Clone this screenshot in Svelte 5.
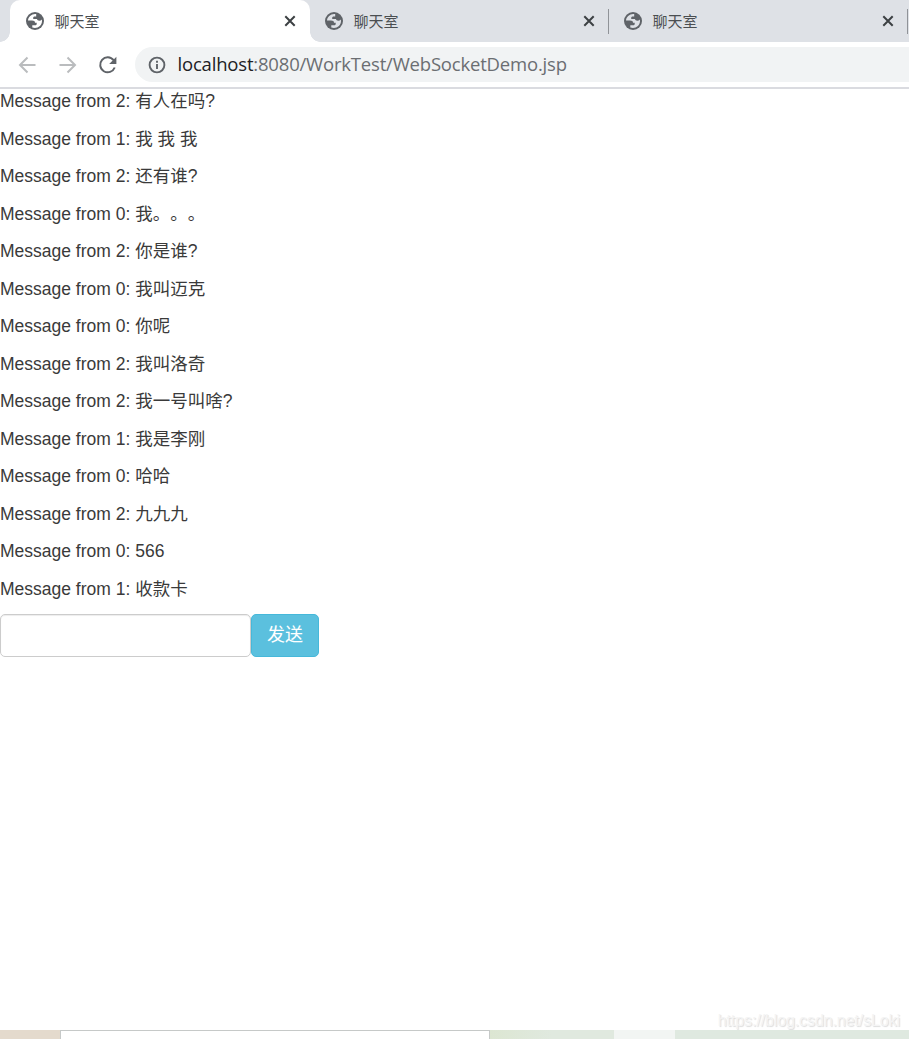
<script>
  const tabs = [
    { id: 1, title: '聊天室', active: true },
    { id: 2, title: '聊天室', active: false },
    { id: 3, title: '聊天室', active: false }
  ];

  const messages = [
    { from: 2, text: '有人在吗?' },
    { from: 1, text: '我 我 我' },
    { from: 2, text: '还有谁?' },
    { from: 0, text: '我。。。' },
    { from: 2, text: '你是谁?' },
    { from: 0, text: '我叫迈克' },
    { from: 0, text: '你呢' },
    { from: 2, text: '我叫洛奇' },
    { from: 2, text: '我一号叫啥?' },
    { from: 1, text: '我是李刚' },
    { from: 0, text: '哈哈' },
    { from: 2, text: '九九九' },
    { from: 0, text: '566' },
    { from: 1, text: '收款卡' }
  ];

  let draft = $state('');
</script>

<div class="window">
  <header class="tabs">
    {#each tabs as tab (tab.id)}
      <div class="tab" class:active={tab.active}>
        <svg class="globe" viewBox="0 0 18 18">
          <circle cx="9" cy="9" r="9" />
          <path
            d="M10.2 2C6 1.400 2.200 4.600 2 8.600h4c2 0 3 .8 3 2.100h1.700v1c0 .9-.6 1.600-1.600 1.600H6.300v2.200c4.900 1.700 9.700-1.700 9.700-6.500 0-.7-.1-1.100-.2-1.500-.6.8-1.500 1.200-2.500 1.200-1.300 0-2.100-.6-2.300-1.700H7.200V5.800c0-.8.6-1.400 1.400-1.400h1.600z"
          />
        </svg>
        <span class="title">{tab.title}</span>
        <svg class="close" viewBox="0 0 12 12">
          <path d="M1.300 1.300l9.400 9.400M10.700 1.300l-9.400 9.400" />
        </svg>
      </div>
    {/each}
  </header>

  <nav class="toolbar">
    <svg class="nav-icon muted" viewBox="0 0 20 20">
      <path d="M18.500 10H3.500M10.500 2.500L3 10l7.500 7.500" />
    </svg>
    <svg class="nav-icon muted" viewBox="0 0 20 20">
      <path d="M2.500 10h15M10.500 2.500L18 10l-7.500 7.500" />
    </svg>
    <svg class="nav-icon" viewBox="0 0 20 20">
      <path d="M16.600 5.200A7.500 7.500 0 1 0 17.700 12.500" />
      <path class="solid" d="M19.400 1.800v7.200h-7.200z" />
    </svg>
    <div class="address">
      <svg class="info" viewBox="0 0 18 18">
        <circle cx="9" cy="9" r="7.400" />
        <path d="M9 8v5M9 4.800v1.900" />
      </svg>
      <span class="url"><b>localhost</b>:8080/WorkTest/WebSocketDemo.jsp</span>
    </div>
  </nav>

  <main>
    {#each messages as message}
      <p>Message from {message.from}: {message.text}</p>
    {/each}
    <form class="send" onsubmit={(event) => event.preventDefault()}>
      <input type="text" bind:value={draft} />
      <button type="submit">发送</button>
    </form>
  </main>

  <div class="watermark">https://blog.csdn.net/sLoki</div>

  <footer class="desktop">
    <div class="sand"></div>
    <div class="panel"></div>
    <div class="grass"></div>
    <div class="light"></div>
    <div class="mint"></div>
  </footer>
</div>

<style>
  :global(body) {
    margin: 0;
    background: #fff;
  }

  .window {
    box-sizing: border-box;
    display: flex;
    flex-direction: column;
    height: 1039px;
    overflow: hidden;
    width: 909px;
  }

  .tabs {
    background: #dee1e6;
    display: flex;
    flex: none;
    height: 42px;
    padding-left: 10px;
  }

  .tab {
    align-items: center;
    box-sizing: border-box;
    display: flex;
    flex: none;
    height: 42px;
    padding: 0 14px 0 15px;
    position: relative;
    width: 299px;
  }

  .tab.active {
    background: #fff;
    border-radius: 10px 10px 0 0;
    padding-left: 16px;
    width: 300px;
  }

  /* flared feet of the selected tab */
  .tab.active::before,
  .tab.active::after {
    bottom: 0;
    content: '';
    height: 10px;
    position: absolute;
    width: 10px;
  }

  .tab.active::before {
    background: radial-gradient(circle at 0 0, transparent 9.5px, #fff 10px);
    left: -10px;
  }

  .tab.active::after {
    background: radial-gradient(circle at 100% 0, transparent 9.5px, #fff 10px);
    right: -10px;
  }

  .tab:not(.active)::after {
    background: #909398;
    content: '';
    height: 25px;
    position: absolute;
    right: 0;
    top: 9px;
    width: 1.5px;
  }

  .globe {
    height: 18px;
    width: 18px;
  }

  .globe circle {
    fill: #5f6368;
  }

  .globe path {
    fill: #dee1e6;
  }

  .active .globe path {
    fill: #fff;
  }

  .title {
    color: #4a4e51;
    flex: 1;
    font: 400 15px/20px 'Noto Sans CJK SC', sans-serif;
    margin-left: 10.5px;
  }

  .close {
    height: 12px;
    width: 12px;
  }

  .close path {
    stroke: #3c4043;
    stroke-width: 2;
  }

  .toolbar {
    align-items: center;
    border-bottom: 2px solid #dadbe0;
    box-sizing: border-box;
    display: flex;
    flex: none;
    gap: 20px;
    height: 47px;
    padding-left: 17px;
  }

  .nav-icon {
    fill: none;
    flex: none;
    height: 20px;
    stroke: #5f6368;
    stroke-width: 2;
    width: 20px;
  }

  .nav-icon.muted {
    stroke: #babcbe;
  }

  .nav-icon .solid {
    fill: #5f6368;
    stroke: none;
  }

  .address {
    align-items: center;
    background: #f1f3f4;
    border-radius: 18px 0 0 18px;
    display: flex;
    flex: 1;
    height: 35px;
    margin-left: -2px;
    padding-left: 13px;
  }

  .info {
    fill: none;
    height: 18px;
    stroke: #5f6368;
    stroke-width: 1.9;
    width: 18px;
  }

  .url {
    color: #6b6e72;
    font: 18.5px/24px 'Open Sans', sans-serif;
    letter-spacing: -0.19px;
    margin: -2px 0 0 11.5px;
    white-space: nowrap;
  }

  .url b {
    color: #202124;
    font-weight: 400;
  }

  main {
    color: #3a3a3a;
    flex: 1;
    font: 17.5px/25px 'Liberation Sans', 'Noto Sans CJK SC', sans-serif;
  }

  p {
    height: 25px;
    margin: 0 0 12.5px;
    text-spacing-trim: space-all;
    white-space: nowrap;
  }

  .send {
    display: flex;
  }

  input {
    border: 1px solid #ccc;
    border-radius: 5px;
    box-shadow: inset 0 1px 1px rgba(0, 0, 0, 0.075);
    box-sizing: border-box;
    height: 43px;
    padding: 7px 15px;
    width: 251px;
  }

  button {
    background: #5bc0de;
    border: 1px solid #46b8da;
    border-radius: 5px;
    color: #fff;
    font: 18px/25px 'Liberation Sans', 'Noto Sans CJK SC', sans-serif;
    height: 43px;
    padding: 0;
    width: 68px;
  }

  .watermark {
    align-self: flex-end;
    color: #f4f4f4;
    font: 16px/18px 'Liberation Sans', sans-serif;
    letter-spacing: -0.1px;
    padding-right: 9px;
    text-shadow: 1px 1px 1px #dcdcdc;
  }

  .desktop {
    display: flex;
    flex: none;
    height: 9px;
  }

  .sand {
    background: #e4dacd;
    width: 60px;
  }

  .panel {
    border: 1px solid #c6c9c8;
    border-bottom: 0;
    box-sizing: border-box;
    width: 430px;
  }

  .grass {
    background: linear-gradient(90deg, #dce6d2, #e0e9df 50%);
    width: 124px;
  }

  .light {
    background: #f2f5f3;
    width: 61px;
  }

  .mint {
    background: #dfe9e0;
    flex: 1;
  }
</style>
